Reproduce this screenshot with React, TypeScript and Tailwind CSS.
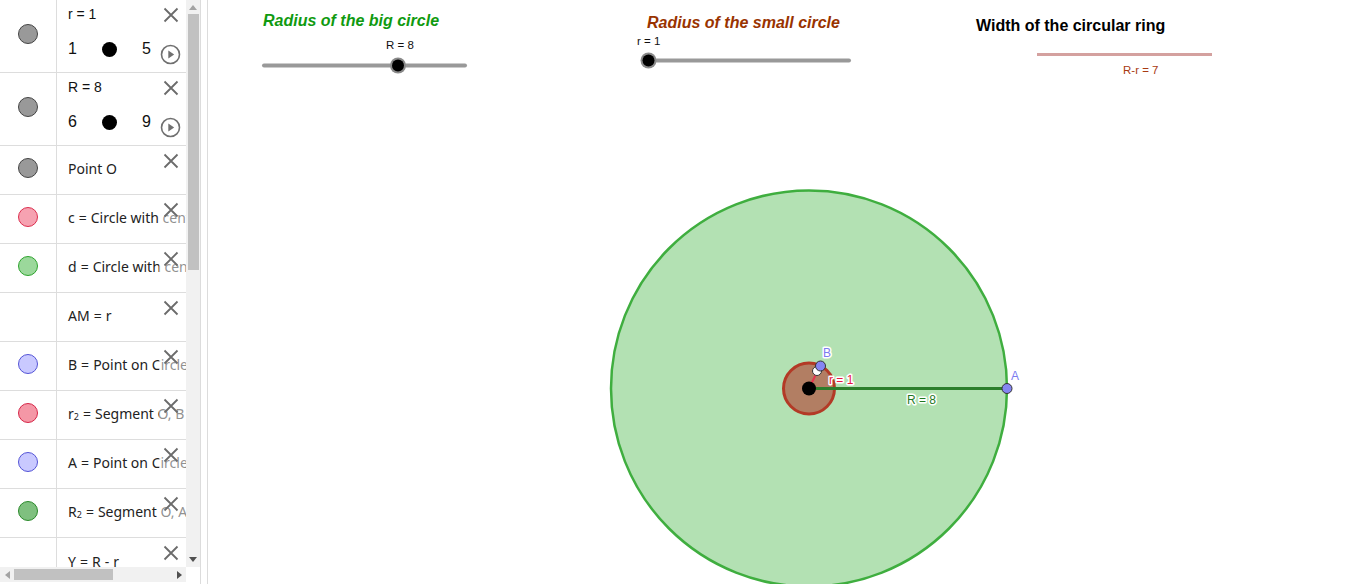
import type { ReactNode } from 'react';

const arial = { fontFamily: '"Liberation Sans", Arial, sans-serif' };

function CloseIcon() {
  return (
    <svg width="16" height="16" viewBox="0 0 16 16">
      <path d="M1.5 1.5L14.5 14.5M14.5 1.5L1.5 14.5" stroke="#6b6b6b" strokeWidth="1.8" />
    </svg>
  );
}

function PlayIcon() {
  return (
    <svg width="21" height="21" viewBox="0 0 21 21">
      <circle cx="10.5" cy="10.5" r="9" fill="none" stroke="#707070" strokeWidth="1.6" />
      <path d="M8.3 6.6V14.4L14.2 10.5Z" fill="#707070" />
    </svg>
  );
}

function Marker({ bg, border }: { bg: string; border: string }) {
  return <div className={`h-[20px] w-[20px] rounded-full border ${bg} ${border}`} />;
}

type RowProps = {
  marker?: ReactNode;
  children: ReactNode;
  tall?: boolean;
  fade?: boolean;
  grow?: boolean;
};

function Row({ marker, children, tall, fade = true, grow }: RowProps) {
  return (
    <div
      className={`relative flex shrink-0 border-b border-[#dddddd] ${
        tall ? 'h-[73px]' : grow ? 'h-[60px]' : 'h-[49px]'
      }`}
    >
      <div className="flex w-[57px] shrink-0 items-center justify-center border-r border-[#dddddd] pb-[5px]">
        {marker}
      </div>
      <div className="relative flex-1 overflow-hidden">{children}</div>
      {fade && <div className="absolute right-0 top-0 h-full w-[27px] bg-white/50" />}
      <div className="absolute right-[7px] top-[7px]">
        <CloseIcon />
      </div>
    </div>
  );
}

function TextCell({ children, top }: { children: ReactNode; top?: boolean }) {
  return (
    <div
      className={`flex h-full whitespace-nowrap pl-[11px] text-[14px] text-[#222] ${
        top ? 'items-start pt-[13px]' : 'items-center pb-[4px]'
      }`}
      style={{ fontFamily: '"Noto Sans", "Open Sans", sans-serif' }}
    >
      {children}
    </div>
  );
}

function Eq() {
  return <span className="mx-[4px]">=</span>;
}

function Sub({ children }: { children: ReactNode }) {
  return <span className="relative top-[4px] text-[9px]">{children}</span>;
}

function SliderCell({ label, min, max }: { label: string; min: string; max: string }) {
  return (
    <div className="relative h-full pl-[11px] pt-[5px] text-[#111]" style={arial}>
      <div className="h-[18px] text-[14px] leading-[18px]">{label}</div>
      <div className="mt-[16px] flex h-[20px] items-center text-[16px] leading-[20px]">
        <span className="w-[34px]">{min}</span>
        <span className="h-[15px] w-[15px] rounded-full bg-black" />
        <span className="ml-[25px]">{max}</span>
      </div>
      <div className="absolute left-[103px] top-[44px]">
        <PlayIcon />
      </div>
    </div>
  );
}

function Tri({ dir }: { dir: 'up' | 'down' | 'left' | 'right' }) {
  const d = {
    up: 'M0 5L4 0L8 5Z',
    down: 'M0 0L8 0L4 5Z',
    left: 'M5 0L5 8L0 4Z',
    right: 'M0 0L5 4L0 8Z',
  }[dir];
  const vert = dir === 'up' || dir === 'down';
  return (
    <svg width={vert ? 8 : 5} height={vert ? 5 : 8} viewBox={vert ? '0 0 8 5' : '0 0 5 8'}>
      <path d={d} fill={dir === 'right' || dir === 'down' ? '#505050' : '#a3a3a3'} />
    </svg>
  );
}

function AlgebraView() {
  return (
    <div className="flex w-[200px] shrink-0 flex-col">
      <div className="flex h-[567px]">
        <div className="flex w-[186px] flex-col overflow-hidden">
          <Row tall fade={false} marker={<Marker bg="bg-[#999999]" border="border-[#444444]" />}>
            <SliderCell label="r = 1" min="1" max="5" />
          </Row>
          <Row tall fade={false} marker={<Marker bg="bg-[#999999]" border="border-[#444444]" />}>
            <SliderCell label="R = 8" min="6" max="9" />
          </Row>
          <Row marker={<Marker bg="bg-[#999999]" border="border-[#444444]" />}>
            <TextCell>Point O</TextCell>
          </Row>
          <Row marker={<Marker bg="bg-[#f6a2b1]" border="border-[#dc2e4e]" />}>
            <TextCell>
              c<Eq />Circle with center O
            </TextCell>
          </Row>
          <Row marker={<Marker bg="bg-[#9bd89b]" border="border-[#2ea42e]" />}>
            <TextCell>
              d<Eq />Circle with center O
            </TextCell>
          </Row>
          <Row>
            <TextCell>
              AM<Eq />r
            </TextCell>
          </Row>
          <Row marker={<Marker bg="bg-[#c9c9ff]" border="border-[#5454d6]" />}>
            <TextCell>
              B<Eq />Point on Circle
            </TextCell>
          </Row>
          <Row marker={<Marker bg="bg-[#f497a6]" border="border-[#d62648]" />}>
            <TextCell>
              r<Sub>2</Sub>
              <Eq />Segment O, B
            </TextCell>
          </Row>
          <Row marker={<Marker bg="bg-[#c9c9ff]" border="border-[#5454d6]" />}>
            <TextCell>
              A<Eq />Point on Circle
            </TextCell>
          </Row>
          <Row marker={<Marker bg="bg-[#7fc07f]" border="border-[#2b8a2b]" />}>
            <TextCell>
              R<Sub>2</Sub>
              <Eq />Segment O, A
            </TextCell>
          </Row>
          <Row grow fade={false}>
            <TextCell top>
              Y<Eq />R<span className="mx-[4px]">-</span>r
            </TextCell>
          </Row>
        </div>
        <div className="flex w-[14px] flex-col items-center bg-[#f1f1f1]">
          <div className="flex h-[14px] items-center justify-center">
            <Tri dir="up" />
          </div>
          <div className="h-[256px] w-[11px] bg-[#c1c1c1]" />
          <div className="flex-1" />
          <div className="flex h-[14px] items-center justify-center pb-[1px]">
            <Tri dir="down" />
          </div>
        </div>
      </div>
      <div className="flex h-[17px]">
        <div className="flex h-[15px] w-[186px] items-center bg-[#f1f1f1]">
          <div className="flex w-[14px] justify-center">
            <Tri dir="left" />
          </div>
          <div className="h-[11px] w-[99px] bg-[#c1c1c1]" />
          <div className="flex-1" />
          <div className="flex w-[14px] justify-center">
            <Tri dir="right" />
          </div>
        </div>
        <div className="w-[14px] bg-white" />
      </div>
    </div>
  );
}

function Halo({ x, y, fill, children, size = 12 }: { x: number; y: number; fill: string; children: ReactNode; size?: number }) {
  return (
    <text
      x={x}
      y={y}
      fill={fill}
      fontSize={size}
      stroke="white"
      strokeWidth={3}
      paintOrder="stroke"
      strokeLinejoin="round"
      style={arial}
    >
      {children}
    </text>
  );
}

function GraphicsView() {
  const cx = 809;
  const cy = 388.5;
  return (
    <div className="relative flex-1 bg-white">
      <svg width="1144" height="584" viewBox="208 0 1144 584" style={arial}>
        {/* big circle slider */}
        <text x="263" y="26" fontSize="16" fontWeight="bold" fontStyle="italic" fill="#109a10">
          Radius of the big circle
        </text>
        <text x="386" y="49" fontSize="11.5" fill="#111">R = 8</text>
        <line x1="264" y1="65.5" x2="465" y2="65.5" stroke="#999999" strokeWidth="4" strokeLinecap="round" />
        <circle cx="398" cy="65.5" r="8" fill="#8a8a8a" />
        <circle cx="398" cy="65.5" r="6" fill="#000" />

        {/* small circle slider */}
        <text x="647" y="28" fontSize="16" fontWeight="bold" fontStyle="italic" fill="#993300">
          Radius of the small circle
        </text>
        <text x="637" y="45" fontSize="11.5" fill="#111">r = 1</text>
        <line x1="649" y1="60.5" x2="849" y2="60.5" stroke="#999999" strokeWidth="4" strokeLinecap="round" />
        <circle cx="648.5" cy="60.5" r="8" fill="#8a8a8a" />
        <circle cx="648.5" cy="60.5" r="6" fill="#000" />

        {/* ring width */}
        <text x="976" y="31" fontSize="16" fontWeight="bold" fill="#000">
          Width of the circular ring
        </text>
        <line x1="1037" y1="54.5" x2="1212" y2="54.5" stroke="#d4a19f" strokeWidth="3" />
        <text x="1123" y="74" fontSize="11.5" fill="#a83a12">R-r = 7</text>

        {/* circles */}
        <circle cx={cx} cy={cy} r="198" fill="#b3e1b3" stroke="#3fae3f" strokeWidth="2.5" />
        <circle cx={cx} cy={cy} r="25.5" fill="#b27e63" stroke="#b33a26" strokeWidth="3" />

        {/* segments */}
        <line x1={cx} y1={cy} x2="1007" y2={cy} stroke="#2c7e2c" strokeWidth="3" />
        <line x1={cx} y1={cy} x2="820" y2="366" stroke="#e8334f" strokeWidth="2" />

        {/* points */}
        <circle cx="817" cy="371" r="4.5" fill="white" stroke="#333" strokeWidth="1" />
        <circle cx={cx} cy={cy} r="7" fill="#000" />
        <circle cx="820.5" cy="366" r="5" fill="#8585f2" stroke="#333" strokeWidth="1" />
        <circle cx="1007" cy={cy} r="5" fill="#8585f2" stroke="#333" strokeWidth="1" />

        {/* labels */}
        <Halo x={823} y={357} fill="#7b7bf0" size={12}>B</Halo>
        <Halo x={1011} y={380} fill="#7b7bf0" size={12}>A</Halo>
        <Halo x={829} y={384} fill="#e5173f" size={12}>r = 1</Halo>
        <Halo x={907} y={404} fill="#1f7a1f" size={12}>R = 8</Halo>
      </svg>
    </div>
  );
}

export default function App() {
  return (
    <div className="flex h-[584px] w-[1352px] overflow-hidden bg-white">
      <AlgebraView />
      <div className="w-[8px] shrink-0 border-x border-[#dcdcdc] bg-white" />
      <GraphicsView />
    </div>
  );
}
